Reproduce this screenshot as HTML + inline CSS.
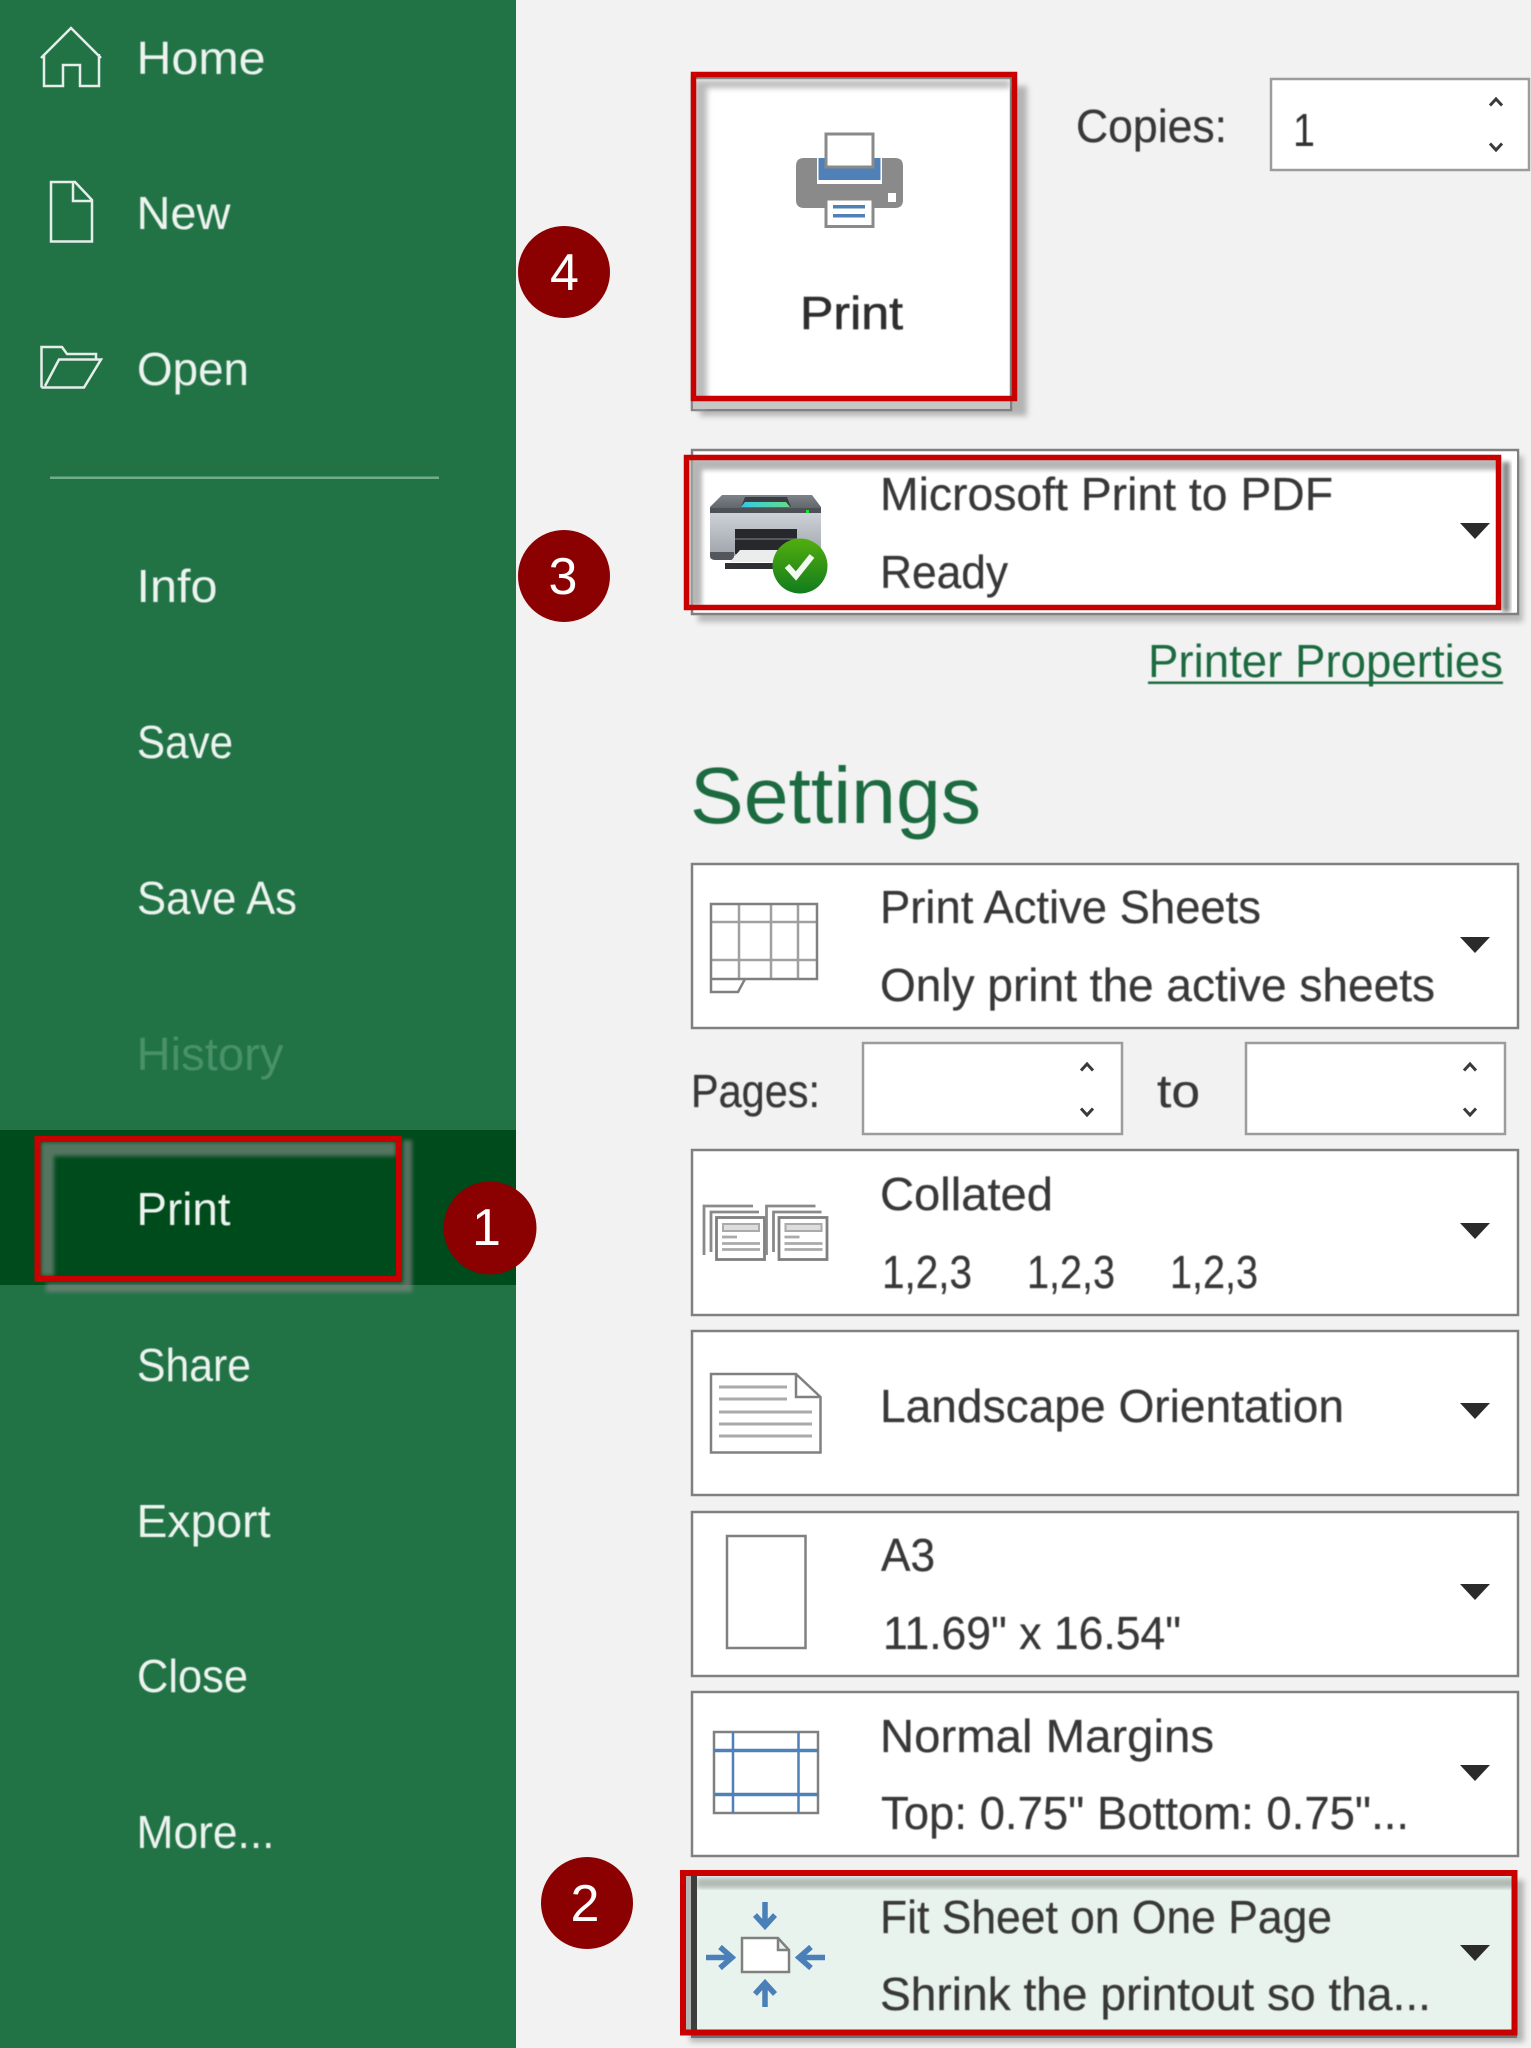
<!DOCTYPE html>
<html><head><meta charset="utf-8"><title>Print</title>
<style>
html,body{margin:0;padding:0;background:#f2f2f2;width:1531px;height:2048px;overflow:hidden}
svg{display:block;position:absolute;left:0;top:0}
text{font-family:"Liberation Sans",sans-serif;font-size:46px}
.s text{fill:#edf3ef}
.d text{fill:#383838;stroke:#383838;stroke-width:.25}
</style></head><body>
<svg width="1531" height="2048" viewBox="0 0 1531 2048" xmlns="http://www.w3.org/2000/svg">
<defs>
<filter id="b3" x="-20%" y="-20%" width="140%" height="140%"><feGaussianBlur stdDeviation="3"/></filter>
<filter id="b2" x="-20%" y="-20%" width="140%" height="140%"><feGaussianBlur stdDeviation="2"/></filter>
<filter id="t" x="-5%" y="-20%" width="110%" height="140%"><feGaussianBlur stdDeviation="0.45"/></filter>
<linearGradient id="body" x1="0" y1="0" x2="0" y2="1"><stop offset="0" stop-color="#ccd2d8"/><stop offset="1" stop-color="#9ea4aa"/></linearGradient>
<linearGradient id="top" x1="0" y1="0" x2="0" y2="1"><stop offset="0" stop-color="#7d8389"/><stop offset="1" stop-color="#55595e"/></linearGradient>
<linearGradient id="win" x1="0" y1="0" x2="1" y2="0"><stop offset="0" stop-color="#35c8e8"/><stop offset="1" stop-color="#62dc88"/></linearGradient>
<linearGradient id="ok" x1="0" y1="0" x2="0" y2="1"><stop offset="0" stop-color="#52ae0e"/><stop offset="1" stop-color="#127c1c"/></linearGradient>
<path id="ar" d="M0 0H30L15 16Z" fill="#2b2b2b"/>
<path id="sp" d="M-6 3.500L0-3L6 3.500M-6 41.500L0 48L6 41.500" fill="none" stroke="#3a3a3a" stroke-width="3"/>
</defs>

<rect width="1531" height="2048" fill="#f2f2f2"/>
<rect width="516" height="2048" fill="#217346"/>
<rect x="0" y="1130" width="516" height="155" fill="#004b1c"/>
<rect x="50" y="476.500" width="389" height="2.500" fill="#70ad8b"/>

<!-- sidebar print shadow -->
<path d="M403 1140H412V1292H46V1283H403Z" fill="#8a8a8a" opacity=".62" filter="url(#b2)"/>
<path d="M41 1142H396V1156H54V1276H41Z" fill="#9a9a9a" opacity=".55" filter="url(#b2)"/>

<!-- sidebar icons -->
<g fill="none" stroke="#e6eeea" stroke-width="2.500">
<path d="M41 58L71 28L101 58M44 54V86H63V65H80V86H99V54"/>
<path d="M51 182H75L92 200V241.500H51ZM73 182V201H92"/>
<path d="M41.500 387.500V347H62L67 354H96V360M41.500 387.500H84L101 359.500H59L45 386"/>
</g>

<g class="s" filter="url(#t)">
<text x="136.500" y="74" textLength="129" lengthAdjust="spacingAndGlyphs">Home</text>
<text x="136.500" y="229" textLength="94" lengthAdjust="spacingAndGlyphs">New</text>
<text x="137" y="385" textLength="112" lengthAdjust="spacingAndGlyphs">Open</text>
<text x="136.500" y="602" textLength="81" lengthAdjust="spacingAndGlyphs">Info</text>
<text x="137" y="758" textLength="96" lengthAdjust="spacingAndGlyphs">Save</text>
<text x="137" y="914" textLength="160" lengthAdjust="spacingAndGlyphs">Save As</text>
<text x="136.500" y="1070" textLength="147" lengthAdjust="spacingAndGlyphs" style="fill:#4a9168">History</text>
<text x="136.500" y="1225" textLength="94" lengthAdjust="spacingAndGlyphs">Print</text>
<text x="137" y="1381" textLength="114" lengthAdjust="spacingAndGlyphs">Share</text>
<text x="136.500" y="1537" textLength="134" lengthAdjust="spacingAndGlyphs">Export</text>
<text x="137" y="1692" textLength="111" lengthAdjust="spacingAndGlyphs">Close</text>
<text x="136.500" y="1848" textLength="138" lengthAdjust="spacingAndGlyphs">More...</text>
</g>

<!-- sidebar red box -->
<rect x="37.500" y="1139" width="361.500" height="140" fill="none" stroke="#c80000" stroke-width="6"/>

<!-- Print button -->
<rect x="700" y="86" width="327" height="330" fill="#8a8a8a" opacity=".6" filter="url(#b3)"/>
<rect x="692" y="78" width="319" height="332" fill="#fff" stroke="#808080" stroke-width="2.500"/>
<path d="M694 80H1010V88H707V409H694Z" fill="#aaa" opacity=".8" filter="url(#b3)"/>
<rect x="693" y="401" width="317" height="8" fill="#c6c6c6"/>
<rect x="693.500" y="74.500" width="321" height="324" fill="none" stroke="#c80000" stroke-width="5.500"/>

<!-- printer icon -->
<path d="M804 158H895Q903 158 903 166V200Q903 208 895 208H804Q796 208 796 200V166Q796 158 804 158Z" fill="#8a8a8a"/>
<rect x="817" y="158" width="65" height="26" fill="#fff"/>
<rect x="818.500" y="158" width="62" height="22" fill="#4f81b8"/>
<rect x="826" y="134" width="47" height="33" fill="#fff" stroke="#8a8a8a" stroke-width="3"/>
<rect x="826" y="199" width="47" height="27.500" fill="#fff" stroke="#8a8a8a" stroke-width="3"/>
<rect x="833" y="205" width="32" height="3.500" fill="#4f81b8"/><rect x="833" y="214" width="32" height="3.500" fill="#4f81b8"/>
<rect x="888" y="193" width="8" height="9" fill="#fff"/>

<g class="d" filter="url(#t)">
<text x="800" y="329" textLength="103" lengthAdjust="spacingAndGlyphs" style="fill:#2e2e2e;stroke:#2e2e2e;stroke-width:.6">Print</text>
<text x="1076" y="142" textLength="151" lengthAdjust="spacingAndGlyphs">Copies:</text>
</g>

<!-- copies -->
<rect x="1271" y="79" width="258" height="91" fill="#fff" stroke="#9c9c9c" stroke-width="2.500"/>
<text x="1293" y="146" textLength="22" lengthAdjust="spacingAndGlyphs" fill="#333" filter="url(#t)">1</text>
<use href="#sp" x="1496" y="102"/>

<!-- printer dropdown -->
<rect x="698" y="456" width="825" height="166" fill="#8a8a8a" opacity=".55" filter="url(#b3)"/>
<rect x="692" y="450" width="826" height="164" fill="#fff" stroke="#808080" stroke-width="2.500"/>
<rect x="1501" y="452" width="16" height="160" fill="#fff"/>
<path d="M1502 462H1510V612H1502Z" fill="#8a8a8a" filter="url(#b2)"/>
<path d="M690 458H1500V470H702V606H690Z" fill="#aaa" opacity=".85" filter="url(#b2)"/>
<rect x="686.500" y="457.500" width="812" height="150" fill="none" stroke="#c80000" stroke-width="5.500"/>

<!-- status printer -->
<path d="M722 495H812L821 507V514H710V507Z" fill="url(#top)"/>
<rect x="710" y="508" width="111" height="5" fill="#4d5156"/>
<path d="M745 497H787L791 507H741Z" fill="#3a3e42"/>
<path d="M745 502H786L790 507H741Z" fill="url(#win)"/>
<rect x="806" y="510" width="3" height="3" fill="#22e030"/>
<path d="M710 513H821V556H710Z" fill="url(#body)"/>
<path d="M710 552H734V560H716Q710 560 710 556Z" fill="#53575c"/>
<rect x="735" y="529" width="62" height="25" fill="#26282b"/>
<rect x="735" y="538" width="62" height="2" fill="#55585c"/>
<path d="M740 550H785V562H730Z" fill="#ececec"/>
<rect x="725" y="563" width="55" height="6" fill="#2e3033"/>
<circle cx="800" cy="566" r="27.500" fill="url(#ok)"/>
<path d="M787 566L796 576L812 556" fill="none" stroke="#f4f8f2" stroke-width="6"/>
<use href="#ar" x="1460" y="523"/>

<g class="d" filter="url(#t)">
<text x="880" y="510" textLength="453" lengthAdjust="spacingAndGlyphs">Microsoft Print to PDF</text>
<text x="880" y="588" textLength="128" lengthAdjust="spacingAndGlyphs">Ready</text>
</g>

<g filter="url(#t)" fill="#1f6b41">
<text x="1148" y="677" textLength="355" lengthAdjust="spacingAndGlyphs" fill="#1f6b41">Printer Properties</text>
<rect x="1148" y="681.500" width="355" height="2.500"/>
<text x="690" y="823" textLength="291" lengthAdjust="spacingAndGlyphs" fill="#1f6b41" style="font-size:80px">Settings</text>
</g>

<!-- dropdown boxes -->
<g fill="#fff" stroke="#808080" stroke-width="2.500">
<rect x="692" y="864" width="826" height="164"/>
<rect x="692" y="1150" width="826" height="165"/>
<rect x="692" y="1331" width="826" height="164"/>
<rect x="692" y="1512" width="826" height="164"/>
<rect x="692" y="1692" width="826" height="164"/>
</g>
<g fill="#fff" stroke="#9c9c9c" stroke-width="2.500">
<rect x="863" y="1043" width="259" height="91"/>
<rect x="1246" y="1043" width="259" height="91"/>
</g>
<use href="#sp" x="1087" y="1067"/><use href="#sp" x="1470" y="1067"/>
<use href="#ar" x="1460" y="937"/><use href="#ar" x="1460" y="1223"/><use href="#ar" x="1460" y="1403"/><use href="#ar" x="1460" y="1584"/><use href="#ar" x="1460" y="1765"/>

<!-- sheet icon -->
<g fill="none" stroke="#a0a0a0" stroke-width="2.500">
<path d="M739 904V979M771 904V979M798 904V979M711 922H817M711 960H817"/>
</g>
<path d="M711 904H817V979H711ZM711 979V992H738L745 979" fill="none" stroke="#808080" stroke-width="2.500"/>

<!-- collated icon -->
<g fill="none">
<path d="M704 1255V1206H753M711 1252V1212H759" stroke="#8a8a8a" stroke-width="2.800"/>
<rect x="716.500" y="1217.500" width="48" height="42" fill="#fff" stroke="#808080" stroke-width="2.800"/>
<rect x="723" y="1224" width="36" height="7" fill="#ddd" stroke="#aaa" stroke-width="2"/>
<path d="M722 1237H737M722 1243.500H760M722 1249.500H760" stroke="#aaa" stroke-width="2.800"/>
</g>
<g transform="translate(62.500 0)" fill="none">
<path d="M704 1255V1206H753M711 1252V1212H759" stroke="#8a8a8a" stroke-width="2.800"/>
<rect x="716.500" y="1217.500" width="48" height="42" fill="#fff" stroke="#808080" stroke-width="2.800"/>
<rect x="723" y="1224" width="36" height="7" fill="#ddd" stroke="#aaa" stroke-width="2"/>
<path d="M722 1237H737M722 1243.500H760M722 1249.500H760" stroke="#aaa" stroke-width="2.800"/>
</g>

<!-- landscape icon -->
<path d="M711 1374H796L820.500 1397V1452.500H711ZM796 1374V1397H820.500" fill="#fff" stroke="#808080" stroke-width="2.500"/>
<path d="M719 1387H787M719 1399H787M719 1412H812M719 1424H812M719 1436H812" stroke="#aaa" stroke-width="3" fill="none"/>

<!-- page icon -->
<rect x="727" y="1536" width="78.500" height="112" fill="#fff" stroke="#808080" stroke-width="2.500"/>

<!-- margins icon -->
<rect x="714" y="1732" width="104" height="81" fill="#fff" stroke="#808080" stroke-width="2.500"/>
<path d="M733 1732V1813M798.500 1732V1813" stroke="#4f81b8" stroke-width="2.500"/>
<path d="M714 1750.500H818M714 1794.500H818" stroke="#4f81b8" stroke-width="3.500"/>

<!-- fit box -->
<rect x="690" y="1880" width="834" height="162" fill="#8a8a8a" opacity=".6" filter="url(#b3)"/>
<rect x="691" y="2035" width="826" height="3" fill="#707070"/>
<rect x="684" y="1875" width="832" height="157" fill="#e9f3ee"/>
<path d="M697 1878H1514V1888H697Z" fill="#a8b0ac" opacity=".85" filter="url(#b2)"/>
<rect x="685" y="1876" width="6" height="156" fill="#b5b5b5"/>
<rect x="691" y="1876" width="6" height="156" fill="#3e3e3e"/>
<rect x="683" y="1873" width="831.500" height="159.500" fill="none" stroke="#c80000" stroke-width="6"/>
<use href="#ar" x="1460" y="1945"/>

<!-- fit icon -->
<path d="M742 1938H778L789 1950V1972H742ZM778 1938V1950H789" fill="#fff" stroke="#808080" stroke-width="2.500"/>
<g fill="none" stroke="#4a7fb8" stroke-width="5.500">
<path d="M765 1902V1927M755 1915L765 1926L775 1915"/>
<path d="M765 2007V1982M755 1994L765 1983L775 1994"/>
<path d="M706 1957.500H732M720 1947L732 1957.500L720 1968"/>
<path d="M825 1957.500H799M811 1947L799 1957.500L811 1968"/>
</g>

<g class="d" filter="url(#t)">
<text x="880" y="923" textLength="381" lengthAdjust="spacingAndGlyphs">Print Active Sheets</text>
<text x="880" y="1001" textLength="555" lengthAdjust="spacingAndGlyphs">Only print the active sheets</text>
<text x="691" y="1107" textLength="129" lengthAdjust="spacingAndGlyphs">Pages:</text>
<text x="1157" y="1107" textLength="43" lengthAdjust="spacingAndGlyphs">to</text>
<text x="880" y="1210" textLength="173" lengthAdjust="spacingAndGlyphs">Collated</text>
<text x="882" y="1288" textLength="90" lengthAdjust="spacingAndGlyphs">1,2,3</text>
<text x="1027" y="1288" textLength="88" lengthAdjust="spacingAndGlyphs">1,2,3</text>
<text x="1170" y="1288" textLength="88" lengthAdjust="spacingAndGlyphs">1,2,3</text>
<text x="880" y="1422" textLength="464" lengthAdjust="spacingAndGlyphs">Landscape Orientation</text>
<text x="881" y="1571" textLength="54" lengthAdjust="spacingAndGlyphs">A3</text>
<text x="883" y="1649" textLength="298" lengthAdjust="spacingAndGlyphs">11.69" x 16.54"</text>
<text x="880" y="1752" textLength="334" lengthAdjust="spacingAndGlyphs">Normal Margins</text>
<text x="881" y="1829" textLength="528" lengthAdjust="spacingAndGlyphs">Top: 0.75" Bottom: 0.75"...</text>
<text x="880" y="1933" textLength="452" lengthAdjust="spacingAndGlyphs">Fit Sheet on One Page</text>
<text x="880" y="2010" textLength="551" lengthAdjust="spacingAndGlyphs">Shrink the printout so tha...</text>
</g>

<!-- numbered circles -->
<g fill="#8b0000">
<circle cx="490" cy="1228" r="46.500"/>
<circle cx="587" cy="1903" r="46"/>
<circle cx="564" cy="576" r="46"/>
<circle cx="564" cy="272" r="46"/>
</g>
<g fill="#fff" text-anchor="middle">
<text x="486.500" y="1245" style="font-size:52px" fill="#fff">1</text>
<text x="585" y="1921" style="font-size:52px" fill="#fff">2</text>
<text x="563" y="594" style="font-size:52px" fill="#fff">3</text>
<text x="564.500" y="290" style="font-size:52px" fill="#fff">4</text>
</g>
</svg>
</body></html>
